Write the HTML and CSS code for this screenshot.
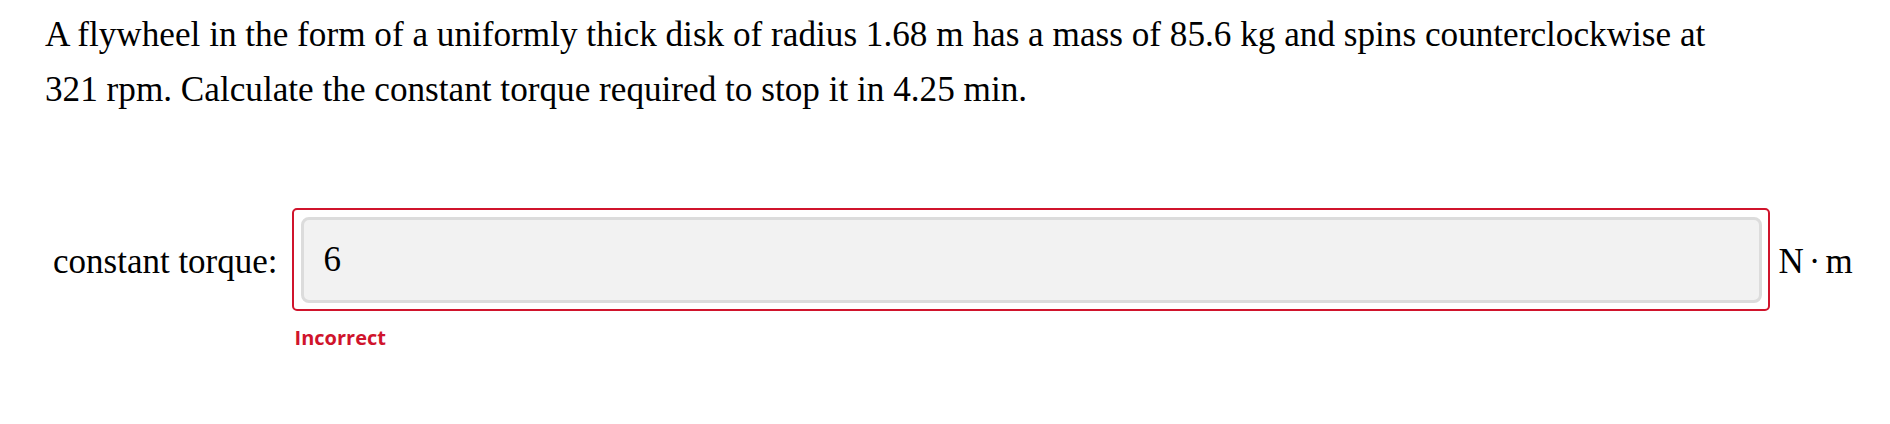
FILE: index.html
```html
<!DOCTYPE html>
<html lang="en">
<head>
<meta charset="utf-8">
<title>Flywheel torque</title>
<link rel="stylesheet" href="styles.css">
</head>
<body>
<div class="page">
  <p class="question">A flywheel in the form of a uniformly thick disk of radius 1.68 m has a mass of 85.6 kg and spins counterclockwise at 321 rpm. Calculate the constant torque required to stop it in 4.25 min.</p>
  <div class="answer">
    <label class="label" for="ans">constant torque:</label>
    <div class="field-wrap">
      <input id="ans" class="field" type="text" value="6">
    </div>
    <span class="unit">N<span class="dot">·</span>m</span>
    <div class="feedback">Incorrect</div>
  </div>
</div>
</body>
</html>
```

FILE: styles.css
```css
html, body {
  margin: 0;
  padding: 0;
  background: #ffffff;
}

.page {
  padding: 7px 0 0 45px;
  font-family: "Liberation Serif", "Times New Roman", serif;
  color: #000000;
}

.question {
  margin: 0;
  max-width: 1700px;
  font-size: 35.2px;
  line-height: 55px;
}

.answer {
  margin-top: 91px;
  padding-left: 8px;
  display: grid;
  grid-template-columns: auto auto auto;
  justify-content: start;
  align-items: center;
}

.label {
  font-size: 35px;
  line-height: 40px;
  margin-right: 14px;
  margin-top: 4px;
}

.field-wrap {
  border: 2px solid #d0142c;
  border-radius: 5px;
  padding: 7px 6px 6px 7px;
}

.field {
  display: block;
  box-sizing: border-box;
  width: 1461px;
  height: 86px;
  margin: 0;
  padding: 0 20px;
  border: 3px solid #dcdcdc;
  border-radius: 8px;
  background: #f2f2f2;
  font-family: "Liberation Serif", "Times New Roman", serif;
  font-size: 35px;
  color: #000000;
  outline: none;
}

.unit {
  font-size: 35px;
  margin-left: 9px;
  margin-top: 4px;
}

.dot {
  margin: 0 5px;
}

.feedback {
  grid-column: 2;
  margin-top: 13px;
  margin-left: 3px;
  font-family: "Open Sans", "Noto Sans", sans-serif;
  font-weight: 700;
  font-size: 20px;
  line-height: 27px;
  color: #d0142c;
}
```
